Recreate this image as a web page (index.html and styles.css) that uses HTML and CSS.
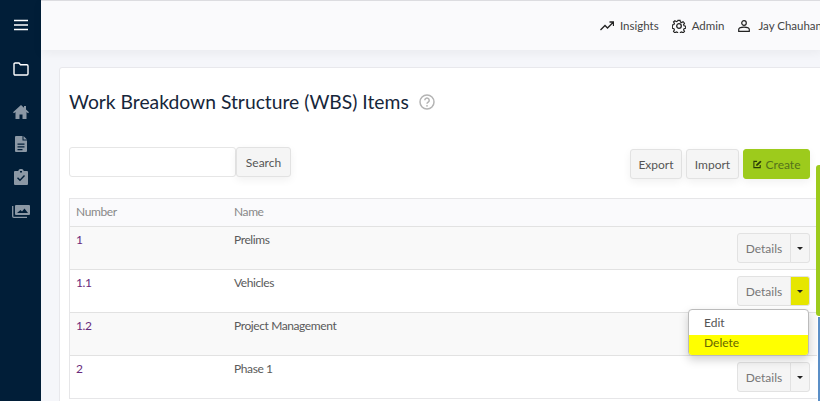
FILE: index.html
```html
<!DOCTYPE html>
<html lang="en">
<head>
<meta charset="utf-8">
<title>WBS Items</title>
<link rel="stylesheet" href="styles.css">
</head>
<body>
<div class="app">
  <nav class="sidebar">
    <div class="side-top">
      <svg class="ic-menu" viewBox="0 0 14 12" width="14" height="12"><path d="M0 1.5h14M0 6h14M0 10.5h14" stroke="#fff" stroke-width="1.4"/></svg>
    </div>
    <div class="side-folder">
      <svg viewBox="0 0 16 14" width="16" height="14"><path d="M1 3V2.200C1 1.500 1.500 1 2.200 1H6l1.500 1.700h6.300c.7 0 1.200.5 1.200 1.200v7.900c0 .7-.5 1.200-1.200 1.200H2.200C1.500 13 1 12.500 1 11.800z" fill="none" stroke="#fff" stroke-width="1.400"/></svg>
    </div>
    <div class="side-list">
      <svg viewBox="0 0 16 14" width="16" height="14"><path d="M8 0 0 7.200l1 1L2.500 7v7h4V9.500h3V14h4V7L15 8.200l1-1L13 4.500V1h-2v1.700z" fill="#8b98a5"/></svg>
      <svg viewBox="0 0 12 16" width="12" height="16"><path d="M1 0h6.500v4.500H12V15a1 1 0 0 1-1 1H1a1 1 0 0 1-1-1V1a1 1 0 0 1 1-1zm7.500 0L12 3.500H8.500zM2.500 7.500v1.300h7V7.500zm0 2.800v1.300h7v-1.300zm0 2.700v1.200h5V13z" fill="#8b98a5" fill-rule="evenodd"/></svg>
      <svg viewBox="0 0 14 16" width="14" height="16"><path d="M1 2h3.200a2.900 2.900 0 0 1 5.600 0H13a1 1 0 0 1 1 1v12a1 1 0 0 1-1 1H1a1 1 0 0 1-1-1V3a1 1 0 0 1 1-1zm5 0v1.500h2V2zM3 9.300l1-1 2 2 4-4.200 1 1-5 5.200z" fill="#8b98a5" fill-rule="evenodd"/></svg>
      <svg viewBox="0 0 18 16" width="18" height="16"><path d="M4 3h4l1.500 0H17a1 1 0 0 1 1 1v8a1 1 0 0 1-1 1H4a1 1 0 0 1-1-1V4a1 1 0 0 1 1-1zm1 8h11l-3.500-4.500L10 9.500 8.500 8z" fill="#8b98a5" fill-rule="evenodd"/><path d="M.7 4v10.200c0 .6.500 1.100 1.100 1.100H15" fill="none" stroke="#8b98a5" stroke-width="1.300"/></svg>
    </div>
  </nav>
  <div class="main">
    <header class="topbar">
      <a class="top-link">
        <svg viewBox="0 0 14 10" width="14" height="10"><path d="M.5 9 5 4.500l2.500 2.500L13 1.500M9.500 1H13.500V5" fill="none" stroke="#222" stroke-width="1.300"/></svg>
        <span>Insights</span>
      </a>
      <a class="top-link">
        <svg viewBox="0 0 14 14" width="14" height="14"><circle cx="7" cy="7" r="2.300" fill="none" stroke="#222" stroke-width="1.300"/><path d="M5.800.8h2.400l.4 1.800 1.300.6 1.600-1 1.600 1.700-1 1.600.5 1.300 1.800.4v2.400l-1.800.4-.5 1.300 1 1.600-1.600 1.700-1.600-1-1.300.5-.4 1.800H5.800l-.4-1.800-1.300-.5-1.600 1-1.600-1.700 1-1.600-.5-1.300-1.800-.4V5.800l1.800-.4.500-1.300-1-1.600L2.500 1.200l1.600 1 1.300-.6z" transform="translate(.7 .7) scale(.9)" fill="none" stroke="#222" stroke-width="1.300"/></svg>
        <span>Admin</span>
      </a>
      <a class="top-link user">
        <svg viewBox="0 0 12 12" width="12" height="12"><circle cx="6" cy="3" r="2.300" fill="none" stroke="#222" stroke-width="1.200"/><path d="M.7 11.300V9.500c0-1.300 2.500-2.300 5.300-2.300s5.300 1 5.300 2.300v1.800z" fill="none" stroke="#222" stroke-width="1.200"/></svg>
        <span>Jay Chauhan</span>
      </a>
    </header>
    <main class="content">
      <section class="card">
        <h1 class="title">Work Breakdown Structure (WBS) Items
          <svg class="help" viewBox="0 0 16 16" width="16" height="16"><circle cx="8" cy="8" r="7" fill="none" stroke="#b4b4b4" stroke-width="1.500"/><path d="M5.800 6.200a2.200 2.200 0 1 1 3.400 1.900c-.8.500-1.200.9-1.200 1.700" fill="none" stroke="#b4b4b4" stroke-width="1.500"/><circle cx="8" cy="11.800" r=".9" fill="#b4b4b4"/></svg>
        </h1>
        <div class="toolbar">
          <form class="search">
            <input class="search-input" type="text" aria-label="Search">
            <button class="btn btn-search" type="button">Search</button>
          </form>
          <div class="actions">
            <button class="btn btn-export" type="button">Export</button>
            <button class="btn btn-import" type="button">Import</button>
            <button class="btn btn-create" type="button">
              <svg viewBox="0 0 10 10" width="9" height="9"><path d="M8 5.500V8.500H1V1.500h3.500" fill="none" stroke="#2a3a08" stroke-width="1.200"/><path d="M3.500 6.500V5L8 .7 9.500 2 5 6.500z" fill="#2a3a08"/></svg>
              Create
            </button>
          </div>
        </div>
        <div class="table">
          <div class="row head"><span>Number</span><span>Name</span></div>
          <div class="row odd"><a class="num">1</a><span>Prelims</span>
            <div class="split"><button class="btn split-main" type="button">Details</button><button class="btn split-caret" type="button"><i class="caret"></i></button></div></div>
          <div class="row"><a class="num">1.1</a><span>Vehicles</span>
            <div class="split"><button class="btn split-main" type="button">Details</button><button class="btn split-caret active" type="button"><i class="caret"></i></button>
              <ul class="menu"><li>Edit</li><li class="hl">Delete</li></ul></div></div>
          <div class="row odd"><a class="num">1.2</a><span>Project Management</span></div>
          <div class="row"><a class="num">2</a><span>Phase 1</span>
            <div class="split"><button class="btn split-main" type="button">Details</button><button class="btn split-caret" type="button"><i class="caret"></i></button></div></div>
        </div>
      </section>
    </main>
  </div>
  <div class="edge-tab edge-green"></div>
  <div class="edge-tab edge-blue"></div>
</div>
</body>
</html>
```
FILE: styles.css
```css
* { box-sizing: border-box; }
html, body { margin: 0; height: 100%; overflow: hidden; }
body { font-family: "Lato", "Liberation Sans", sans-serif; color: #555; font-size: 12px; background: #f5f6fa; }
.app { display: flex; height: 401px; width: 820px; overflow: hidden; position: relative; }
.sidebar { width: 41px; flex: none; background: #011e38; display: flex; flex-direction: column; align-items: center; }
.side-top { height: 50px; display: flex; align-items: center; justify-content: center; }
.side-folder { height: 38px; display: flex; align-items: center; justify-content: center; }
.side-list { display: flex; flex-direction: column; align-items: center; gap: 17px; padding-top: 17px; }
.main { flex: 1; min-width: 0; }
.topbar { height: 50px; background: #fafafc; border-top: 1px solid #dcdce0; display: flex; align-items: center; justify-content: flex-end; gap: 13px; box-shadow: 0 3px 10px rgba(0,0,0,.05); white-space: nowrap; margin-right: -2px; position: relative; }
.top-link { display: flex; align-items: center; gap: 6px; color: #444; font-size: 11.5px; }
.top-link.user { gap: 8px; margin-left: 1px; }
.content { padding: 17px 0 0 18px; }
.card { width: 780px; background: #fff; border: 1px solid #e8e8ec; border-radius: 3px; padding: 23px 9px 0; height: 340px; }
.title { margin: 0; font-size: 19.3px; font-weight: 400; color: #16263a; height: 22px; line-height: 22px; display: flex; align-items: center; gap: 10px; white-space: nowrap; }
.help { flex: none; }
.toolbar { display: flex; justify-content: space-between; align-items: flex-start; margin-top: 34px; }
.search { display: flex; }
.search-input { width: 167px; height: 30px; border: 1px solid #e6e6e6; border-radius: 3px; background: #fff; }
.btn { font: inherit; font-size: 12px; color: #555; background: #f5f5f5; border: 1px solid #e2e2e2; border-radius: 3px; height: 30px; padding: 0; box-shadow: 0 3px 8px rgba(0,0,0,.06); }
.btn-search { width: 55px; }
.btn-export { width: 52px; }
.btn-import { width: 53px; }
.actions { display: flex; gap: 4px; padding-top: 2px; margin-right: 19px; }
.btn-create { background: #9dcb1c; border-color: #9dcb1c; color: #54721a; display: flex; align-items: center; justify-content: center; gap: 4px; width: 67px; }
.table { margin-top: 19px; border: 1px solid #e6e6e8; border-right: 0; width: 748px; letter-spacing: -.4px; }
.table .btn { letter-spacing: 0; }
.row { display: flex; height: 43px; border-top: 1px solid #e2e2e2; padding: 5px 6px 0; position: relative; font-size: 12px; color: #5a5a5a; }
.row > :first-child { width: 158px; flex: none; }
.row.head { height: 27px; background: #fafafc; border-top: 0; padding-top: 5px; color: #888; }
.row.odd { background: #f9f9f9; }
.num { color: #6a2a7c; }
.split { position: absolute; right: 7px; top: 6px; display: flex; }
.split-main { border-radius: 3px 0 0 3px; width: 54px; color: #777; box-shadow: none; }
.split-caret { border-radius: 0 3px 3px 0; border-left: 1px solid #e2e2e2; width: 20px; margin-left: -1px; display: flex; align-items: center; justify-content: center; box-shadow: none; }
.split-caret.active { background: #e6e600; }
.caret { display: block; border: 3px solid transparent; border-top-color: #222; border-bottom: 0; width: 0; height: 0; }
.menu { position: absolute; right: 1px; top: 33px; width: 121px; height: 47px; margin: 0; padding: 5px 0 0; list-style: none; letter-spacing: 0; background: #fff; border: 1px solid #bbb; border-radius: 4px; box-shadow: 0 4px 10px rgba(0,0,0,.18); z-index: 5; overflow: hidden; }
.menu li { height: 20px; line-height: 15px; padding-left: 15px; color: #555; }
.menu .hl { background: #ff0; color: #666600; }
.edge-tab { position: absolute; right: 0; z-index: 6; }
.edge-green { top: 165px; height: 151px; width: 4px; background: #9dcb1c; border-radius: 3px 0 0 3px; }
.edge-blue { top: 317px; bottom: 0; width: 2px; background: #5b8fc7; }
```
